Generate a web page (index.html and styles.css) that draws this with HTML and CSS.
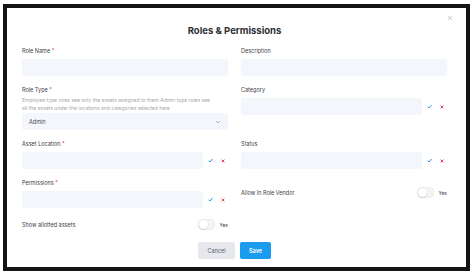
FILE: index.html
```html
<!DOCTYPE html>
<html lang="en">
<head>
    <meta charset="UTF-8">
    <title>Roles &amp; Permissions</title>
    <link rel="stylesheet" href="styles.css">
</head>
<body>
    <div class="frame">
        <div class="modal">
            <span class="close">&times;</span>
            <h1 class="modal-title">Roles &amp; Permissions</h1>

            <div class="form-grid">
                <!-- row 1 -->
                <div class="field">
                    <label class="field-label">Role Name <span class="req">*</span></label>
                    <div class="input"></div>
                </div>
                <div class="field">
                    <label class="field-label">Description</label>
                    <div class="input"></div>
                </div>

                <!-- row 2 -->
                <div class="field">
                    <label class="field-label">Role Type <span class="req">*</span></label>
                    <p class="help">Employee type roles see only the assets assigned to them Admin type roles see<br>all the assets under the locations and categories selected here</p>
                    <div class="input select">
                        <span>Admin</span>
                        <svg class="chevron" width="6" height="4" viewBox="0 0 6 4"><path d="M1 1l2 2 2-2" fill="none" stroke="#9aa0aa" stroke-width="0.8"/></svg>
                    </div>
                </div>
                <div class="field">
                    <label class="field-label">Category</label>
                    <div class="input-row">
                        <div class="input"></div>
                        <svg class="ok" width="5" height="5" viewBox="0 0 5 5"><path d="M0.6 2.7l1.3 1.3 2.6-3" fill="none" stroke="#2c8cd6" stroke-width="1"/></svg>
                        <svg class="cancel" width="4" height="4" viewBox="0 0 4 4"><path d="M0.6 0.6l2.8 2.8M3.4 0.6l-2.8 2.8" stroke="#e04870" stroke-width="1"/></svg>
                    </div>
                </div>

                <!-- row 3 -->
                <div class="field">
                    <label class="field-label">Asset Location <span class="req">*</span></label>
                    <div class="input-row">
                        <div class="input"></div>
                        <svg class="ok" width="5" height="5" viewBox="0 0 5 5"><path d="M0.6 2.7l1.3 1.3 2.6-3" fill="none" stroke="#2c8cd6" stroke-width="1"/></svg>
                        <svg class="cancel" width="4" height="4" viewBox="0 0 4 4"><path d="M0.6 0.6l2.8 2.8M3.4 0.6l-2.8 2.8" stroke="#e04870" stroke-width="1"/></svg>
                    </div>
                </div>
                <div class="field">
                    <label class="field-label">Status</label>
                    <div class="input-row">
                        <div class="input"></div>
                        <svg class="ok" width="5" height="5" viewBox="0 0 5 5"><path d="M0.6 2.7l1.3 1.3 2.6-3" fill="none" stroke="#2c8cd6" stroke-width="1"/></svg>
                        <svg class="cancel" width="4" height="4" viewBox="0 0 4 4"><path d="M0.6 0.6l2.8 2.8M3.4 0.6l-2.8 2.8" stroke="#e04870" stroke-width="1"/></svg>
                    </div>
                </div>

                <!-- row 4 -->
                <div class="field">
                    <label class="field-label">Permissions <span class="req">*</span></label>
                    <div class="input-row">
                        <div class="input"></div>
                        <svg class="ok" width="5" height="5" viewBox="0 0 5 5"><path d="M0.6 2.7l1.3 1.3 2.6-3" fill="none" stroke="#2c8cd6" stroke-width="1"/></svg>
                        <svg class="cancel" width="4" height="4" viewBox="0 0 4 4"><path d="M0.6 0.6l2.8 2.8M3.4 0.6l-2.8 2.8" stroke="#e04870" stroke-width="1"/></svg>
                    </div>
                </div>
                <div class="field vendor">
                    <div class="switch-row">
                        <span class="field-label">Allow In Role Vendor</span>
                        <span class="switch"><span class="knob"></span></span>
                        <span class="switch-text">Yes</span>
                    </div>
                </div>

                <!-- row 5 -->
                <div class="field allotted">
                    <div class="switch-row">
                        <span class="field-label">Show allotted assets</span>
                        <span class="switch"><span class="knob"></span></span>
                        <span class="switch-text">Yes</span>
                    </div>
                </div>
                <div></div>
            </div>

            <div class="actions">
                <button class="btn btn-cancel">Cancel</button>
                <button class="btn btn-save">Save</button>
            </div>
        </div>
    </div>
</body>
</html>
```

FILE: styles.css
```css
/* reset */
* {
    margin: 0;
    padding: 0;
    box-sizing: border-box;
}

body {
    background: #ffffff;
    font-family: 'Inter', 'Noto Sans', sans-serif;
    color: #3a3d44;
}

/* black screenshot frame */
.frame {
    margin: 4px 4px 0 3px;
    height: 267px;
    border: 4px solid #141414;
    background: #ffffff;
}

.modal {
    position: relative;
    height: 100%;
    padding: 15px 19px 0 15px;
}

.close {
    position: absolute;
    top: 4px;
    right: 13px;
    font-size: 9px;
    color: #c4c7cc;
}

.modal-title {
    text-align: center;
    font-size: 9.5px;
    font-weight: 700;
    line-height: 16px;
    color: #2b2e34;
    margin-bottom: 8px;
}

/* two column form */
.form-grid {
    display: grid;
    grid-template-columns: 206px 206px;
    column-gap: 13px;
    align-items: start;
}

.field {
    margin-bottom: 10px;
}

.field-label {
    display: block;
    font-size: 5.5px;
    line-height: 8px;
    color: #3d4048;
    margin-bottom: 4px;
}

.req {
    color: #e0405a;
}

.help {
    font-size: 5px;
    line-height: 8px;
    color: #a3a7ae;
    margin-top: -2px;
    margin-bottom: 1px;
}

.input {
    height: 17px;
    background: #f3f6fa;
    border-radius: 2px;
    flex: 1;
}

.select {
    display: flex;
    align-items: center;
    justify-content: space-between;
    padding: 0 7px 0 7px;
    font-size: 5.5px;
    color: #4a4d55;
}

.input-row {
    display: flex;
    align-items: center;
}

.input-row .input {
    flex: 0 0 181px;
}

.ok {
    margin-left: 5px;
}

.cancel {
    margin-left: 8px;
}

/* toggle rows */
.switch-row {
    display: flex;
    align-items: center;
}

.switch-row .field-label {
    margin-bottom: 0;
    flex: 1;
}

.vendor {
    padding-top: 8px;
}

.allotted {
    margin-top: 1px;
}

.switch {
    width: 17px;
    height: 11px;
    border-radius: 6px;
    background: #f4f5f7;
    box-shadow: inset 0 0 0 0.5px #e2e4e8;
    display: flex;
    align-items: center;
    padding: 1px;
}

.knob {
    width: 9px;
    height: 9px;
    border-radius: 50%;
    background: #ffffff;
    box-shadow: 0 0.5px 1.5px rgba(0, 0, 0, 0.2);
}

.switch-text {
    font-size: 5px;
    margin-left: 4px;
    color: #3d4048;
}

/* buttons */
.actions {
    display: flex;
    justify-content: center;
    gap: 5px;
    margin-top: 2px;
}

.btn {
    height: 17px;
    border: none;
    border-radius: 2px;
    font-family: inherit;
    font-size: 5.5px;
}

.btn-cancel {
    width: 37px;
    background: #e6e8ee;
    color: #5a5e66;
}

.btn-save {
    width: 31px;
    background: #1a9bf0;
    color: #ffffff;
    font-weight: 600;
}
```
